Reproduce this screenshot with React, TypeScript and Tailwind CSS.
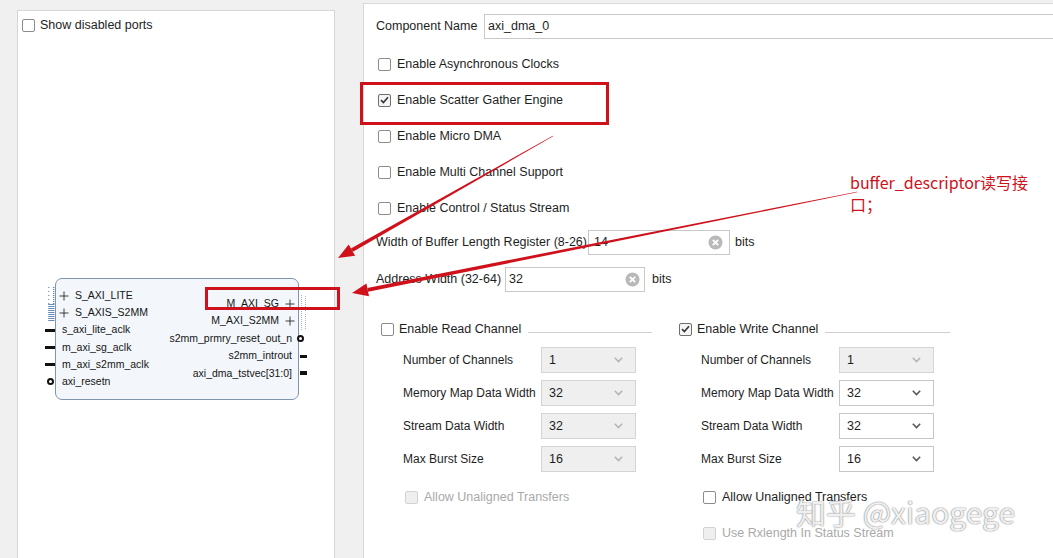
const RED = "#cf111b";

function Check({ checked = false, disabled = false }: { checked?: boolean; disabled?: boolean }) {
  return (
    <span
      className={`flex h-[13px] w-[13px] shrink-0 items-center justify-center rounded-[2px] border ${
        disabled
          ? "border-[#d2d2d2] bg-[#efefef]"
          : checked
          ? "border-[#6f6f6f] bg-[#f5f5f5]"
          : "border-[#8c8c8c] bg-white"
      }`}
    >
      {checked && (
        <svg width="9" height="8" viewBox="0 0 9 8">
          <path d="M1 4.2 L3.4 6.6 L8 1.3" fill="none" stroke="#3a3a3a" strokeWidth="1.7" />
        </svg>
      )}
    </span>
  );
}

function CheckRow({ label, checked }: { label: string; checked?: boolean }) {
  return (
    <div className="flex h-[36px] items-center gap-[6px] pl-[14px]">
      <Check checked={checked} />
      <span className="whitespace-nowrap">{label}</span>
    </div>
  );
}

function ClearIcon() {
  return (
    <svg width="15" height="15" viewBox="0 0 15 15" className="shrink-0">
      <circle cx="7.5" cy="7.5" r="7" fill="#b9b9b9" />
      <path d="M4.8 4.8 L10.2 10.2 M10.2 4.8 L4.8 10.2" stroke="#fff" strokeWidth="1.8" />
    </svg>
  );
}

function Select({ value, disabled }: { value: string; disabled?: boolean }) {
  return (
    <div
      className={`flex h-[26px] w-[95px] shrink-0 items-center justify-between border pl-[7px] pr-[12px] ${
        disabled ? "border-[#d4d4d4] bg-[#efefef]" : "border-[#c6c6c6] bg-white"
      }`}
    >
      <span>{value}</span>
      <svg width="9" height="6" viewBox="0 0 9 6">
        <path
          d="M0.8 0.8 L4.5 4.6 L8.2 0.8"
          fill="none"
          stroke={disabled ? "#b4b4b4" : "#555"}
          strokeWidth="1.5"
        />
      </svg>
    </div>
  );
}

function Channel({ title, enabled, extra }: { title: string; enabled: boolean; extra?: boolean }) {
  const rows: [string, string, boolean][] = [
    ["Number of Channels", "1", true],
    ["Memory Map Data Width", "32", !enabled],
    ["Stream Data Width", "32", !enabled],
    ["Max Burst Size", "16", !enabled],
  ];
  return (
    <div className="flex w-[298px] shrink-0 flex-col">
      <div className="flex h-[16px] w-[271px] items-center">
        <Check checked={enabled} />
        <span className="ml-[5px] whitespace-nowrap">{title}</span>
        <span className="ml-[7px] mt-[6px] h-px flex-1 bg-[#cfcfcf]" />
      </div>
      <div className="mt-[10px] flex flex-col gap-[7px]">
        {rows.map(([label, val, dis]) => (
          <div key={label} className="flex h-[26px] items-center pl-[22px]">
            <span className="w-[138px] shrink-0 whitespace-nowrap text-[12px]">{label}</span>
            <Select value={val} disabled={dis} />
          </div>
        ))}
      </div>
      <div className="mt-[17px] flex h-[16px] items-center gap-[6px] pl-[24px]">
        <Check disabled={!enabled} />
        <span className={`whitespace-nowrap ${enabled ? "" : "text-[#a9a9a9]"}`}>Allow Unaligned Transfers</span>
      </div>
      {extra && (
        <div className="mt-[20px] flex h-[16px] items-center gap-[6px] pl-[24px]">
          <Check disabled />
          <span className="whitespace-nowrap text-[#a9a9a9]">Use Rxlength In Status Stream</span>
        </div>
      )}
    </div>
  );
}

function Plus() {
  return (
    <svg width="10" height="10" viewBox="0 0 10 10" className="shrink-0">
      <path d="M5 0.5V9.5M0.5 5H9.5" stroke="#3c3c3c" strokeWidth="1" />
    </svg>
  );
}

function BusDots({ dense }: { dense?: boolean }) {
  const dots = [];
  for (let y = 0; y < 17; y += 2) {
    dots.push(<rect key={"a" + y} x="6" y={y} width="1.4" height="1" fill="#5c7fb8" />);
    if (dense || y % 4 === 0) dots.push(<rect key={"b" + y} x="1" y={y} width="1.4" height="1" fill="#7f9bc9" />);
    if (dense) dots.push(<rect key={"c" + y} x="2" y={y} width="4" height="1" fill="#6c8cc0" />);
  }
  return (
    <svg width="9" height="17" viewBox="0 0 9 17">
      {dots}
    </svg>
  );
}

function RightBusDots() {
  const dots = [];
  for (let y = 0; y < 17; y += 2) {
    dots.push(<rect key={"a" + y} x="1" y={y} width="1" height="1" fill="#9fb4d6" />);
    dots.push(<rect key={"b" + y} x="5" y={y + 1} width="1" height="1" fill="#9fb4d6" />);
  }
  return (
    <svg width="8" height="17" viewBox="0 0 8 17">
      {dots}
    </svg>
  );
}

const leftPorts: [string, string][] = [
  ["S_AXI_LITE", "bus1"],
  ["S_AXIS_S2MM", "bus2"],
  ["s_axi_lite_aclk", "wire"],
  ["m_axi_sg_aclk", "wire"],
  ["m_axi_s2mm_aclk", "wire"],
  ["axi_resetn", "neg"],
];

const rightPorts: [string, string][] = [
  ["M_AXI_SG", "bus"],
  ["M_AXI_S2MM", "bus"],
  ["s2mm_prmry_reset_out_n", "neg"],
  ["s2mm_introut", "wire"],
  ["axi_dma_tstvec[31:0]", "vec"],
];

function IpBlock() {
  return (
    <div className="absolute left-[37px] top-[267px] flex h-[122px] w-[244px] justify-between rounded-[7px] border border-[#8094ad] bg-[#f3f7fb] text-[10.5px] text-[#151515]">
      <div className="flex flex-col pl-[3px] pt-[8px]">
        {leftPorts.map(([name, kind]) => (
          <div key={name} className="relative flex h-[17.25px] items-center">
            {kind.startsWith("bus") ? (
              <>
                <span className="absolute left-[-12px] top-0">
                  <BusDots dense={kind === "bus2"} />
                </span>
                <Plus />
                <span className="ml-[6px]">{name}</span>
              </>
            ) : (
              <>
                {kind === "wire" ? (
                  <span className="absolute left-[-14px] top-[7px] h-[3px] w-[10px] bg-[#111]" />
                ) : (
                  <span className="absolute left-[-12px] top-[5px] h-[7px] w-[7px] rounded-full border-2 border-[#111] bg-white" />
                )}
                <span className="ml-[3px]">{name}</span>
              </>
            )}
          </div>
        ))}
      </div>
      <div className="flex flex-col items-end pr-[3px] pt-[16px]">
        {rightPorts.map(([name, kind]) => (
          <div key={name} className="relative flex h-[17.5px] items-center">
            {kind === "bus" ? (
              <>
                <span>{name}</span>
                <span className="ml-[6px]">
                  <Plus />
                </span>
                <span className="absolute right-[-13px] top-0">
                  <RightBusDots />
                </span>
              </>
            ) : (
              <>
                <span className="mr-[3px]">{name}</span>
                {kind === "neg" ? (
                  <span className="absolute right-[-9px] top-[5px] h-[7px] w-[7px] rounded-full border-2 border-[#111] bg-white" />
                ) : (
                  <span
                    className={`absolute right-[-12px] w-[7px] bg-[#111] ${
                      kind === "vec" ? "top-[6px] h-[4px]" : "top-[7px] h-[3px]"
                    }`}
                  />
                )}
              </>
            )}
          </div>
        ))}
      </div>
    </div>
  );
}

function arrow(sx: number, sy: number, tx: number, ty: number, w0: number, w1: number, hl: number, hw: number) {
  const len = Math.hypot(tx - sx, ty - sy);
  const dx = (tx - sx) / len;
  const dy = (ty - sy) / len;
  const nx = dy;
  const ny = -dx;
  const bx = tx - dx * hl;
  const by = ty - dy * hl;
  const p = (x: number, y: number) => `${x.toFixed(1)},${y.toFixed(1)}`;
  const shaft = [
    p(sx + (nx * w0) / 2, sy + (ny * w0) / 2),
    p(bx + (nx * w1) / 2, by + (ny * w1) / 2),
    p(bx - (nx * w1) / 2, by - (ny * w1) / 2),
    p(sx - (nx * w0) / 2, sy - (ny * w0) / 2),
  ].join(" ");
  const head = [p(bx + (nx * hw) / 2, by + (ny * hw) / 2), p(tx, ty), p(bx - (nx * hw) / 2, by - (ny * hw) / 2)].join(" ");
  return { shaft, head };
}

function Overlay() {
  const a1 = arrow(553, 136, 338, 258, 0.6, 4, 16, 13);
  const a2 = arrow(857, 192, 352, 293, 0.6, 4, 16, 13);
  return (
    <svg className="pointer-events-none absolute left-0 top-0" width="1053" height="558" viewBox="0 0 1053 558">
      <rect x="361.5" y="83.5" width="246" height="40" fill="none" stroke={RED} strokeWidth="3" />
      <rect x="206.5" y="288.5" width="132" height="20" fill="none" stroke={RED} strokeWidth="3" />
      <polygon points={a1.shaft} fill={RED} />
      <polygon points={a1.head} fill={RED} />
      <polygon points={a2.shaft} fill={RED} />
      <polygon points={a2.head} fill={RED} />
    </svg>
  );
}

export default function App() {
  return (
    <div className="relative h-[558px] w-[1053px] overflow-hidden bg-[#f0f0f0] font-['Liberation_Sans',Arial,sans-serif] text-[12.5px] text-[#1e1e1e]">
      <div className="flex">
        <div className="relative ml-[17px] mt-[10px] h-[560px] w-[318px] shrink-0 border border-[#d6d6d6] bg-white">
          <div className="ml-[4px] mt-[8px] flex h-[13px] items-center gap-[5px]">
            <Check />
            <span>Show disabled ports</span>
          </div>
          <IpBlock />
        </div>

        <div className="ml-[28px] mt-[3px] flex h-[560px] w-[720px] shrink-0 flex-col border border-[#d8d8d8] bg-white">
          <div className="ml-[12px] mt-[10px] flex h-[25px] items-center">
            <span className="w-[108px] shrink-0">Component Name</span>
            <div className="flex h-[25px] w-[620px] shrink-0 items-center border border-[#c8c8c8] pl-[3px]">axi_dma_0</div>
          </div>
          <div className="mt-[7px] flex flex-col">
            <CheckRow label="Enable Asynchronous Clocks" />
            <CheckRow label="Enable Scatter Gather Engine" checked />
            <CheckRow label="Enable Micro DMA" />
            <CheckRow label="Enable Multi Channel Support" />
            <CheckRow label="Enable Control / Status Stream" />
          </div>
          <div className="ml-[12px] mt-[4px] flex h-[25px] items-center">
            <span className="w-[212px] shrink-0 whitespace-nowrap">Width of Buffer Length Register (8-26)</span>
            <div className="flex h-[25px] w-[142px] shrink-0 items-center justify-between border border-[#c8c8c8] pl-[5px] pr-[6px]">
              <span>14</span>
              <ClearIcon />
            </div>
            <span className="ml-[5px]">bits</span>
          </div>
          <div className="ml-[12px] mt-[12px] flex h-[25px] items-center">
            <span className="w-[129px] shrink-0 whitespace-nowrap">Address Width (32-64)</span>
            <div className="flex h-[25px] w-[140px] shrink-0 items-center justify-between border border-[#c8c8c8] pl-[3px] pr-[4px]">
              <span>32</span>
              <ClearIcon />
            </div>
            <span className="ml-[7px]">bits</span>
          </div>
          <div className="mt-[29px] flex pl-[17px]">
            <Channel title="Enable Read Channel" enabled={false} />
            <Channel title="Enable Write Channel" enabled extra />
          </div>
        </div>
      </div>

      <Overlay />

      <div
        className="absolute left-[850px] top-[171px] font-['Noto_Sans_CJK_SC',sans-serif] text-[16px] leading-[22px]"
        style={{ color: RED }}
      >
        buffer_descriptor读写接
        <br />
        口；
      </div>

      <div className="pointer-events-none absolute left-[796px] top-[491px] font-['Noto_Sans_CJK_SC',sans-serif] text-[30px] leading-[40px] text-white/90 [text-shadow:0_0_1px_rgba(0,0,0,0.55),0_0_2px_rgba(0,0,0,0.3)]">
        知乎 @xiaogege
      </div>
    </div>
  );
}
